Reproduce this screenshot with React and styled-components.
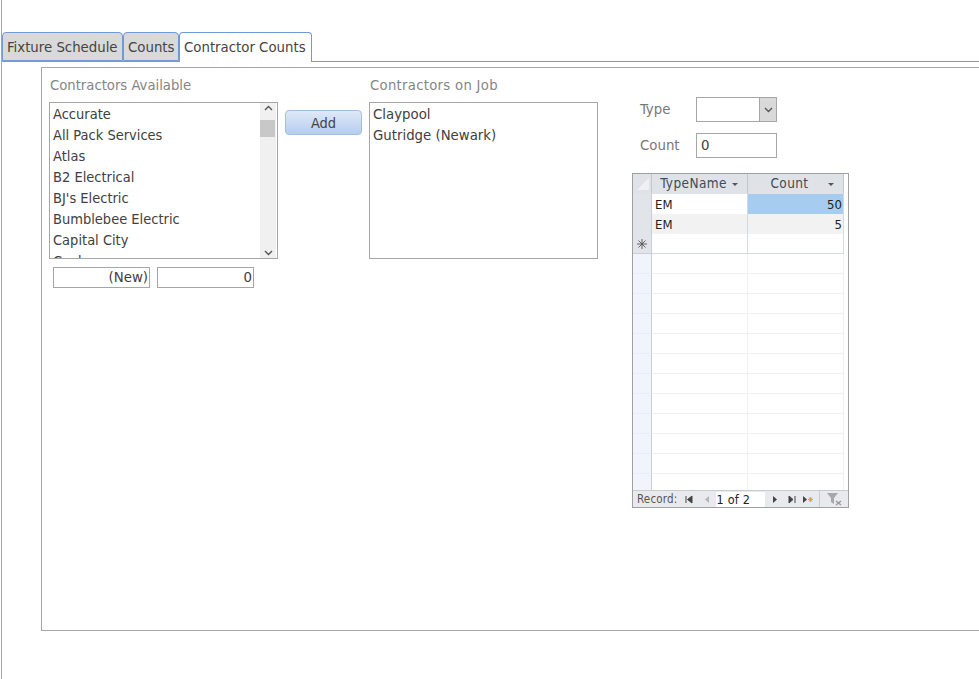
import React from "react";
import styled, { createGlobalStyle } from "styled-components";

const Global = createGlobalStyle`
  html, body { margin: 0; padding: 0; background: #fff; height: 100%; overflow: hidden; }
  body { font-family: "DejaVu Sans Condensed", "DejaVu Sans", sans-serif; font-size: 14px; color: #3f3f3f; }
`;

const Page = styled.div`
  margin-left: 1px;
  height: 679px;
  width: 978px;
  box-sizing: border-box;
  border-left: 1px solid #a6a6a6;
  padding-top: 32px;
  overflow: hidden;
`;

const TabStrip = styled.div`
  display: flex;
  height: 30px;
  box-sizing: border-box;
  border-bottom: 1px solid #7a9cc6;
`;

const Tab = styled.div`
  height: ${p => (p.$active ? "30px" : "29px")};
  box-sizing: border-box;
  width: ${p => p.$w}px;
  padding-left: 4px;
  line-height: 27px;
  font-size: 14.8px;
  white-space: nowrap;
  color: #444;
  background: ${p => (p.$active ? "#fff" : "#d9d9d9")};
  border: 1px solid #6f9ad3;
  border-bottom: ${p => (p.$active ? "none" : "1px solid #6f9ad3")};
  border-radius: 4px 4px 0 0;
`;

const Panel = styled.div`
  margin: 5px 0 0 39px;
  height: 564px;
  box-sizing: border-box;
  border: 1px solid #a6a6a6;
  border-right: none;
  padding-left: 7px;
  display: flex;
  align-items: flex-start;
`;

const Column = styled.div`
  display: flex;
  flex-direction: column;
  width: ${p => p.$w}px;
`;

const GroupLabel = styled.div`
  height: 34px;
  padding-left: 1px;
  line-height: 33px;
  font-size: 14.7px;
  letter-spacing: ${p => p.$track || 0}px;
  color: #858585;
`;

const ListBox = styled.div`
  position: relative;
  width: 229px;
  height: 157px;
  box-sizing: border-box;
  border: 1px solid #a6a6a6;
  padding: ${p => (p.$size ? 0 : 1)}px 3px;
  overflow: hidden;
  font-size: ${p => p.$size || 14.5}px;
`;

const ListItem = styled.div`
  height: 21px;
  line-height: 21px;
  white-space: nowrap;
  color: #404040;
`;

const Scrollbar = styled.div`
  position: absolute;
  top: 0;
  right: 1px;
  bottom: 0;
  width: 16px;
  background: #f0f0f0;
  display: flex;
  flex-direction: column;
  align-items: center;
  justify-content: space-between;
  padding: 2px 0;
  box-sizing: border-box;
`;

const Thumb = styled.div`
  position: absolute;
  top: 17px;
  left: 0;
  width: 15px;
  height: 17px;
  background: #c8c8c8;
`;

const Field = styled.div`
  box-sizing: border-box;
  width: ${p => p.$w}px;
  height: ${p => p.$h}px;
  line-height: ${p => p.$h - 3}px;
  border: 1px solid #a6a6a6;
  background: #fff;
  font-size: 14.8px;
  color: #404040;
  text-align: ${p => (p.$right ? "right" : "left")};
  padding: 0 ${p => (p.$right ? 1 : 4)}px 0 4px;
`;

const NewRow = styled.div`
  display: flex;
  gap: 7px;
  margin: 8px 0 0 4px;
`;

const AddButton = styled.button`
  width: 77px;
  height: 25px;
  margin: 42px 7px 0 7px;
  padding: 0;
  flex: none;
  font: inherit;
  font-size: 14.5px;
  color: #444;
  border: 1px solid #a3bde3;
  border-radius: 4px;
  background: linear-gradient(#dfe9f8, #b6cdee);
`;

const SidePanel = styled.div`
  margin-left: 34px;
  width: 217px;
  display: flex;
  flex-direction: column;
`;

const FormRow = styled.div`
  display: flex;
  align-items: center;
  margin: ${p => p.$mt}px 0 0 8px;
`;

const FormLabel = styled.div`
  width: 56px;
  color: #777;
  font-size: 14.8px;
  margin-top: -2px;
`;

const ComboBox = styled.div`
  box-sizing: border-box;
  width: 81px;
  height: 25px;
  border: 1px solid #a6a6a6;
  display: flex;
  justify-content: flex-end;
`;

const ComboArrow = styled.div`
  width: 16px;
  background: #d9d9d9;
  border-left: 1px solid #a6a6a6;
  display: flex;
  align-items: center;
  justify-content: center;
`;

const Sheet = styled.div`
  margin-top: 15px;
  height: 335px;
  box-sizing: border-box;
  border: 1px solid #a0a0a0;
  display: flex;
  flex-direction: column;
  background: #fff;
`;

const SheetBody = styled.div`
  flex: 1;
  overflow: hidden;
  padding-right: 4px;
`;

const SheetRow = styled.div`
  display: grid;
  grid-template-columns: 19px 96px 96px;
  height: 20px;
`;

const HeadCell = styled.div`
  position: relative;
  background: #dfe3e8;
  border-right: 1px solid #c3c8ce;
  box-sizing: border-box;
  text-align: center;
  line-height: 19px;
  font-size: 13.5px;
  letter-spacing: 0.4px;
  color: #3f4a5a;
  padding-right: ${p => p.$pad || 0}px;
`;

const Selector = styled.div`
  position: relative;
  box-sizing: border-box;
  background: ${p => (p.$blank ? "#f1f4fb" : "#e1e5ea")};
  border-bottom: 1px solid ${p => (p.$blank ? "#e9edf5" : "#c8ced6")};
  border-right: 1px solid #c8ced6;
  display: flex;
  align-items: center;
  justify-content: center;
`;

const Cell = styled.div`
  box-sizing: border-box;
  padding: 0 1px 0 3px;
  line-height: 21px;
  font-size: 13px;
  color: #222;
  text-align: ${p => (p.$right ? "right" : "left")};
  background: ${p => p.$bg || "#fff"};
  border-bottom: 1px solid ${p => p.$line || "#d5dae1"};
  border-right: 1px solid ${p => p.$line || "#d5dae1"};
`;

const NavBar = styled.div`
  height: 16px;
  display: flex;
  align-items: center;
  background: #e8eaee;
  border-top: 1px solid #c8ccd2;
  font-size: 11.5px;
  letter-spacing: 0.2px;
  color: #555;
  padding-left: 4px;
`;

const NavInput = styled.div`
  width: 49px;
  height: 15px;
  box-sizing: border-box;
  background: #fff;
  padding-left: 1px;
  font-size: 12.5px;
  line-height: 15px;
  color: #222;
  margin: 0 4px 0 3px;
`;

const NavButton = styled.svg`
  width: 12px;
  height: 9px;
  flex: none;
  margin-left: ${p => p.$ml || 0}px;
`;

const FilterBox = styled.div`
  margin-left: 5px;
  padding-left: 6px;
  height: 16px;
  display: flex;
  align-items: center;
  border-left: 1px solid #c8ccd2;
`;

const SortMark = styled.svg`
  position: absolute;
  right: 9px;
  top: 9px;
  width: 6px;
  height: 3px;
`;

const Sort = () => (
  <SortMark viewBox="0 0 6 3">
    <path d="M0 0h6L3 3z" fill="#555" />
  </SortMark>
);

const contractors = ["Accurate", "All Pack Services", "Atlas", "B2 Electrical", "BJ's Electric", "Bumblebee Electric", "Capital City", "Cook"];

const Chevron = ({ up }) => (
  <svg width="9" height="6" viewBox="0 0 9 6">
    <path d={up ? "M1 5l3.5-3.5L8 5" : "M1 1l3.5 3.5L8 1"} fill="none" stroke="#555" strokeWidth="1.4" />
  </svg>
);

const blankRows = Array.from({ length: 12 });

export default function App() {
  return (
    <Page>
      <Global />
      <TabStrip>
        <Tab $w={121}>Fixture Schedule</Tab>
        <Tab $w={56}>Counts</Tab>
        <Tab $w={133} $active>Contractor Counts</Tab>
      </TabStrip>
      <Panel>
        <Column $w={229}>
          <GroupLabel>Contractors Available</GroupLabel>
          <ListBox>
            {contractors.map(c => <ListItem key={c}>{c}</ListItem>)}
            <Scrollbar>
              <Chevron up />
              <Thumb />
              <Chevron />
            </Scrollbar>
          </ListBox>
          <NewRow>
            <Field $w={97} $h={21} $right>(New)</Field>
            <Field $w={97} $h={21} $right>0</Field>
          </NewRow>
        </Column>
        <AddButton>Add</AddButton>
        <Column $w={229}>
          <GroupLabel $track={0.3}>Contractors on Job</GroupLabel>
          <ListBox $size={14.8}>
            <ListItem>Claypool</ListItem>
            <ListItem>Gutridge (Newark)</ListItem>
          </ListBox>
        </Column>
        <SidePanel>
          <FormRow $mt={29}>
            <FormLabel>Type</FormLabel>
            <ComboBox>
              <ComboArrow><Chevron /></ComboArrow>
            </ComboBox>
          </FormRow>
          <FormRow $mt={11}>
            <FormLabel>Count</FormLabel>
            <Field $w={81} $h={25}>0</Field>
          </FormRow>
          <Sheet>
            <SheetBody>
              <SheetRow>
                <HeadCell>
                  <svg width="14" height="14" viewBox="0 0 14 14" style={{ position: "absolute", left: 3, top: 3 }}>
                    <path d="M13 1v12H1z" fill="#eef0f3" />
                  </svg>
                </HeadCell>
                <HeadCell $pad={12}>TypeName<Sort /></HeadCell>
                <HeadCell $pad={12}>Count<Sort /></HeadCell>
              </SheetRow>
              <SheetRow>
                <Selector />
                <Cell>EM</Cell>
                <Cell $right $bg="#a6cdef">50</Cell>
              </SheetRow>
              <SheetRow>
                <Selector />
                <Cell $bg="#f2f2f2">EM</Cell>
                <Cell $right $bg="#f2f2f2">5</Cell>
              </SheetRow>
              <SheetRow>
                <Selector>
                  <svg width="10" height="10" viewBox="0 0 10 10">
                    <path d="M5 0v10M0 5h10M1.5 1.5l7 7M8.5 1.5l-7 7" stroke="#555" strokeWidth="0.9" />
                  </svg>
                </Selector>
                <Cell />
                <Cell />
              </SheetRow>
              {blankRows.map((_, i) => (
                <SheetRow key={i}>
                  <Selector $blank />
                  <Cell $line="#f0f0f0" />
                  <Cell $line="#f0f0f0" />
                </SheetRow>
              ))}
            </SheetBody>
            <NavBar>
              Record:
              <NavButton $ml={5} viewBox="0 0 12 9"><path d="M3 1v7M9 1v7L4.5 4.5z" stroke="#444" fill="#444" /></NavButton>
              <NavButton $ml={6} viewBox="0 0 12 9"><path d="M8 1v7L4 4.5z" fill="#b5b5b5" /></NavButton>
              <NavInput>1 of 2</NavInput>
              <NavButton viewBox="0 0 12 9"><path d="M4 1v7l4-3.5z" fill="#444" /></NavButton>
              <NavButton $ml={5} viewBox="0 0 12 9"><path d="M3 1v7l4-3.5zM9 1v7" stroke="#444" fill="#444" /></NavButton>
              <NavButton $ml={4} viewBox="0 0 12 9"><path d="M1 1v7l4-3.5z" fill="#444" /><path d="M6 4.5h5M8.5 2v5M7 2.5l3 4M10 2.5l-3 4" stroke="#e8a33d" /></NavButton>
              <FilterBox>
                <svg width="18" height="14" viewBox="0 0 18 14">
                  <path d="M1 1h11L8 6v6L5 10V6z" fill="#a8a8a8" />
                  <path d="M10 9l5 4M15 9l-5 4" stroke="#9a9a9a" strokeWidth="1.5" />
                </svg>
              </FilterBox>
            </NavBar>
          </Sheet>
        </SidePanel>
      </Panel>
    </Page>
  );
}
